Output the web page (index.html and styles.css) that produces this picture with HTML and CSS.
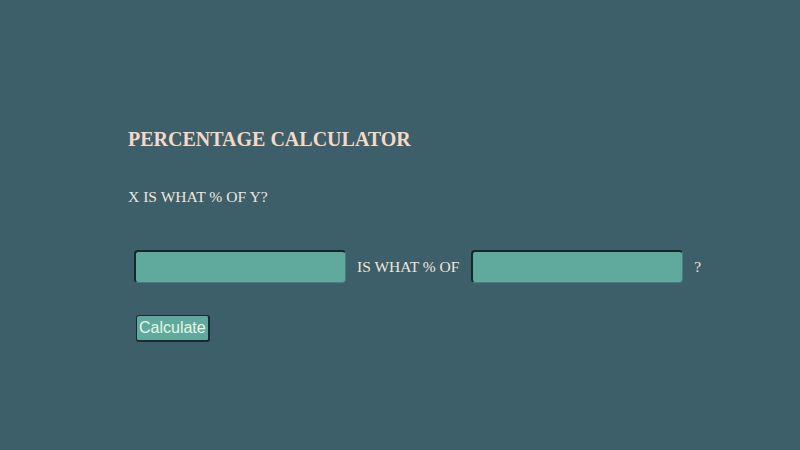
FILE: index.html
```html
<!DOCTYPE html>
<html lang="en">
<head>
    <meta charset="UTF-8">
    <meta name="viewport" content="width=device-width, initial-scale=1.0">
    <title>Percentage Calculator</title>
    <link rel="stylesheet" href="styles.css">
</head>
<body>
    <div class="calculator">
        <h1>PERCENTAGE CALCULATOR</h1>
        <h2>X IS WHAT % OF Y?</h2>

        <div class="calc-row">
            <input type="number" id="xValue">
            <span class="calc-label">IS WHAT % OF</span>
            <input type="number" id="yValue">
            <span>?</span>
        </div>

        <button class="calc-btn">Calculate</button>
    </div>
</body>
</html>
```

FILE: styles.css
```css
body {
    margin: 0;
    background-color: #3c5f69;
    font-family: 'Liberation Serif', 'Times New Roman', serif;
    color: #f1e6dc;
}
.calculator {
    padding: 128px 0 0 128px;
}
h1 {
    margin: 0;
    font-size: 20px;
    font-weight: bold;
    color: #f5d8c6;
}
h2 {
    margin: 37px 0 0;
    font-size: 15.6px;
    font-weight: normal;
}
.calc-row {
    display: flex;
    align-items: center;
    margin-top: 44px;
    font-size: 15.5px;
}
.calc-row input {
    width: 212px;
    height: 33px;
    box-sizing: border-box;
    margin: 0 11px 0 6px;
    background-color: #5faa9c;
    border: 1px solid #4f7c7c;
    border-top: 2px solid #15292d;
    border-left: 2px solid #15292d;
    border-radius: 4px;
}
.calc-label {
    margin-right: 6px;
}
.calc-btn {
    margin: 32px 0 0 8px;
    padding: 3px 2px;
    font-family: 'Liberation Sans', Arial, sans-serif;
    font-size: 16px;
    color: #eaf6e6;
    background-color: #5faa9c;
    border: 1px solid #1b2a2d;
    border-right-width: 2px;
    border-bottom-width: 2px;
    border-radius: 3px;
}
```
